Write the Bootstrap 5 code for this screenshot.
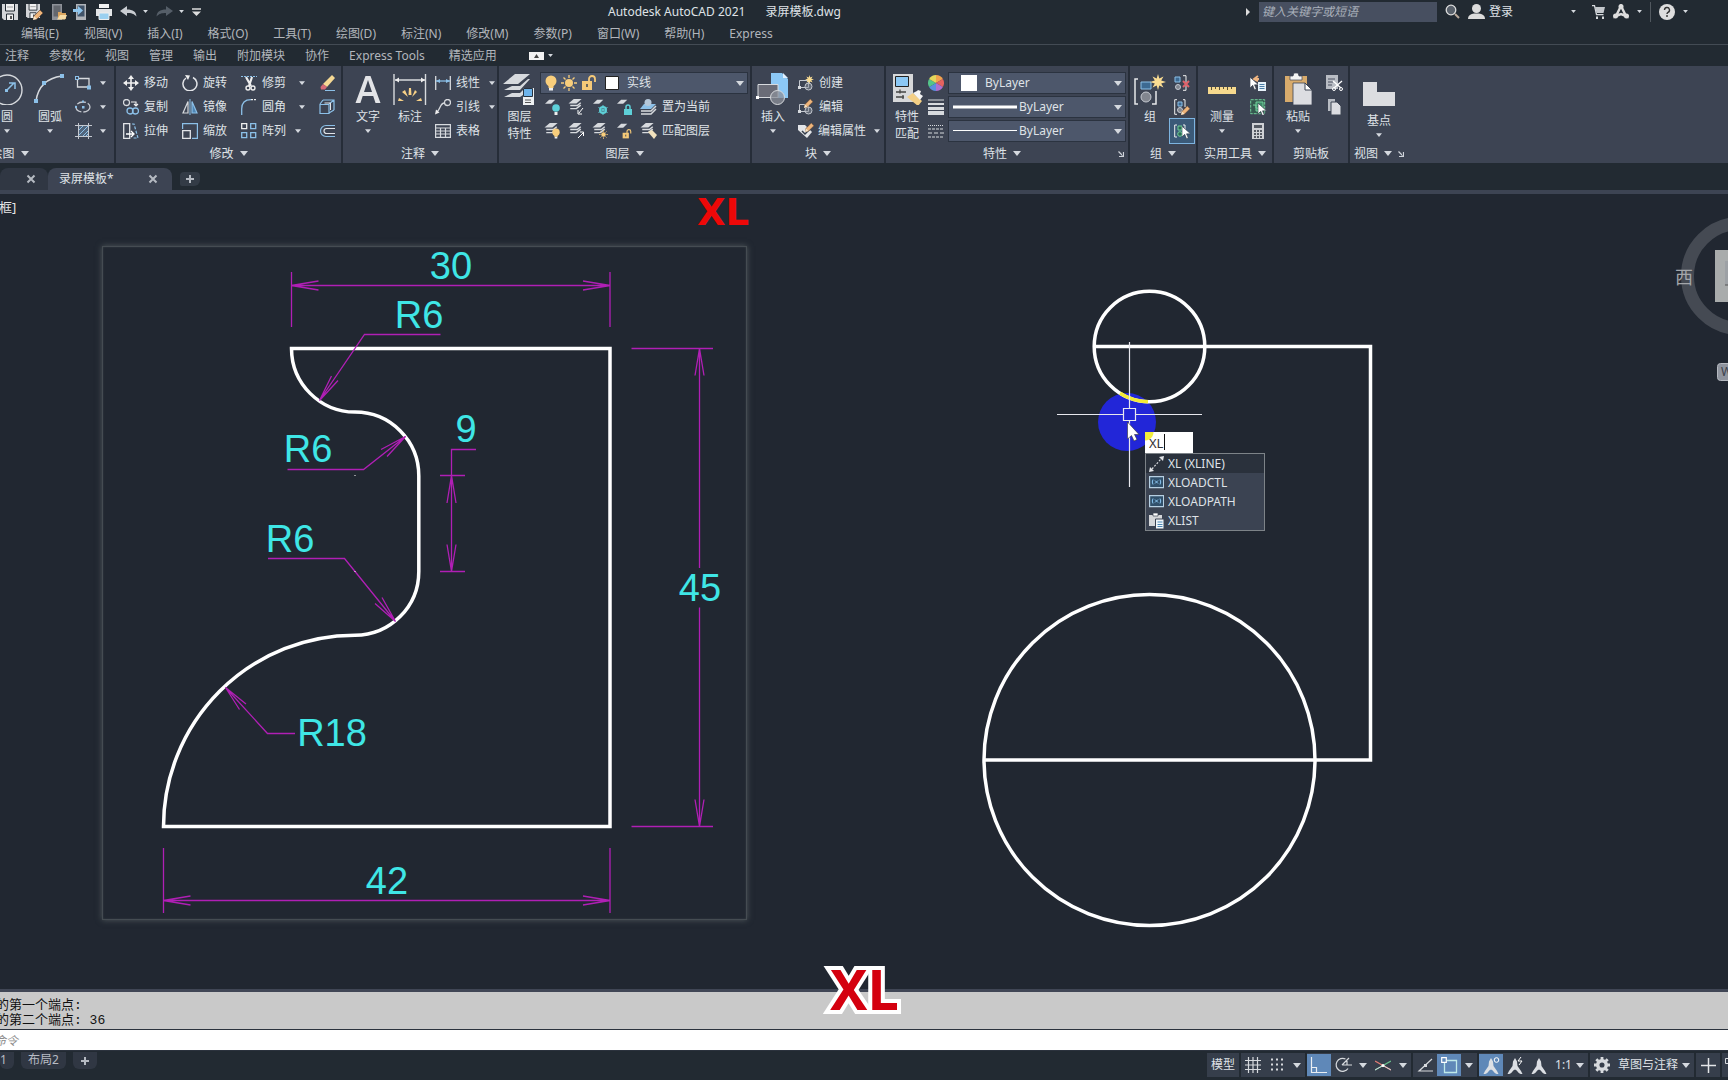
<!DOCTYPE html>
<html lang="zh-CN">
<head>
<meta charset="utf-8">
<meta name="viewport" content="width=device-width, initial-scale=1">
<title>Autodesk AutoCAD 2021 - 录屏模板.dwg</title>
<link href="https://cdn.jsdelivr.net/npm/bootstrap@5.3.0/dist/css/bootstrap.min.css" rel="stylesheet">
<style>
:root{--frame:#222a32;--ribbon:#3d4453;--field:#4d576b;--edge:#262d38;--ink:#dfe2e7;--soft:#b2b6bc;--blue:#8cc0e8;--gold:#f3cd82}
body{font-family:"Noto Sans","Noto Sans CJK SC",sans-serif;font-size:12px;line-height:16px;color:var(--ink);background:var(--frame);height:100vh;overflow:hidden}
button,input,select{font:inherit;color:inherit}
button{background:none;border:0;padding:0;white-space:nowrap}
a{color:inherit;text-decoration:none}
svg{display:block;flex:none}
.titlebar{height:23px}
.title-end{padding-right:40px}
.account{margin-left:58px}
.quick{flex:0 0 608px;padding-left:2px}
.quick button{margin-right:8px}
.quick button.tight{margin-right:6px}
.searchbox{width:178px;height:20px;background:#474f60;border:0;padding:0 3px;font-style:italic;line-height:20px;border-radius:0}
.searchbox::placeholder{color:#a9afba;opacity:1}
.menus{height:22px;gap:25px;padding-left:21px;color:var(--soft);border-bottom:1px solid #434b54;padding-top:3px}
.tabs{height:21px;gap:20px;padding-left:5px;color:var(--soft)}
.ribbon{background:var(--ribbon);height:97px;overflow:hidden}
.panel{flex:none;border-right:2px solid var(--edge);padding-top:4px}
.tools{height:74px}
.rows button,.rows .line{height:24px;display:flex;align-items:center;gap:5px}
.rows{padding-top:1px}
.big{display:flex;flex-direction:column;align-items:center;padding-top:3px;line-height:17px}
.big svg:first-child{margin-bottom:3px}
.caption{height:19px;gap:6px}
.w-draw{width:211px;margin-left:-95px}.w-mod{width:227px}.w-note{width:156px}.w-layer{width:253px}.w-block{width:134px}.w-prop{width:244px}.w-group{width:68px}.w-util{width:76px}.w-clip{width:76px}
.w-mod .tools{gap:14px;padding-left:7px}
.w-draw .big+.big{margin:0 8px 0 10px}
.combo{background:var(--field);border:1px solid #2b3340;height:22px;padding:0 3px 0 4px}
.combo select{appearance:none;background:transparent;border:0;outline:0;padding:0;min-width:0;line-height:18px}
.combo-wrap{padding-right:2px}
.on{background:#3b5a78;box-shadow:0 0 0 1px #7db4e0}
.docs{height:27px;padding-top:5px}
.doc{height:22px;border-radius:8px 8px 0 0;background:#303743}
.doc.live{background:var(--ribbon);width:124px;padding:0 14px 0 11px}
.doc.rest{width:48px;padding-right:12px}
.newdoc{width:20px;height:14px;background:#333b46;border-radius:4px 4px 6px 2px;display:flex;align-items:center;justify-content:center}
.strip{height:4px;background:var(--ribbon)}
.stage{background:#212731;overflow:hidden;min-height:0}
.sheet{left:102px;top:52px;width:645px;height:674px;border:1px solid #454c52;box-shadow:0 0 6px #50585c,inset 0 0 2px #3a4248}
.dims text{font-family:"Liberation Sans",sans-serif;font-size:38px;fill:#3fe6e6}
.hint{left:1145px;top:238px}
.dyn{width:48px;height:21px;border:0;border-radius:0;padding:0 4px;font-size:13px;line-height:19px;color:#333;background:radial-gradient(circle at 0 0,#f2ee3c 8px,#fff 9px)}
.caret-bar{left:19px;top:2px;width:1px;height:16px;background:#111}
.picks{width:120px;background:#3b4352;border:1px solid #7d8388}
.picks button{display:flex;align-items:center;gap:4px;height:19px;width:100%;padding-left:3px}
.picks button:first-child{background:#2a313c}
.cmd{background:#c9c9c9;color:#111;border-top:3px solid #404655;height:40px;font-family:"Liberation Mono","Noto Sans CJK SC",monospace;font-size:13px;line-height:15px;padding-top:6px;overflow:hidden;white-space:pre}
.cmd p{margin:0 0 0 -4px}
.ask{height:22px;border:solid #2b323d;border-width:1px 0;background:#fff;border-radius:0;padding:0;text-indent:-6px;font-style:italic;color:#333;outline:0}
.ask::placeholder{color:#8b8b8b;opacity:1}
.status{height:29px}
.lays{gap:7px;padding-top:1px}
.lay{height:17px;background:#303743;border-radius:0 0 6px 6px;color:#b8bcc4;padding:0 7px}
.stools{padding-top:2px}
.sgroup{background:#363e4b;height:24px;margin-right:2px}
.sgroup>*{height:22px;display:flex;align-items:center;justify-content:center}
.s24{width:24px}.s16{width:16px}.lit{background:#5f88b8}
.caption-red{font-family:"DejaVu Sans",sans-serif;font-weight:700;font-size:37px;fill:#ee0808}
.subtitle-red{left:830px;bottom:60px;font-family:"Noto Sans",sans-serif;font-weight:700;font-size:56px;line-height:64px;color:#d4000f;-webkit-text-stroke:8px #fff;stroke-linejoin:round;paint-order:stroke fill;pointer-events:none}
</style>
</head>
<body class="d-flex flex-column">
<svg width="0" height="0" class="position-absolute" aria-hidden="true">
<defs>
<symbol id="dn" viewBox="0 0 8 5"><path d="M0 0h8L4 5z" fill="#d5d9df"/></symbol>
<symbol id="x" viewBox="0 0 10 10"><path d="M1.500 1.500l7 7M8.500 1.500l-7 7" stroke="#b5bac2" stroke-width="2"/></symbol>
<symbol id="plus" viewBox="0 0 10 10"><path d="M5 1v8M1 5h8" stroke="#b5bac2" stroke-width="2"/></symbol>
<symbol id="save" viewBox="0 0 16 16"><path d="M0 0h16v16H2l-2-2z" fill="#d3d5d8"/><path d="M3.500 0v7h9V0M4.500 16v-6h7v6" fill="#f1f1f1" stroke="#222a32"/><path d="M5 3h6" stroke="#999"/><path d="M8 12h2v3H8z" fill="#555"/></symbol>
<symbol id="pen" viewBox="0 0 10 10"><path d="M0 10l1-4 6-6 3 3-6 6z" fill="#efb57a" stroke="#5a4030" stroke-width=".6"/><path d="M0 10l1-4 3 3z" fill="#f5e3c8"/></symbol>
<symbol id="layer" viewBox="0 0 16 16"><path d="M6 0h9L9 5H0z" fill="#d7dade"/><path d="M2 7.500h8l4-3.200M2 11h7l5-4" stroke="#d7dade" stroke-width="1.700" fill="none"/></symbol>
<symbol id="single" viewBox="0 0 16 16"><path d="M6 1h9L9 7H0z" fill="#d7dade"/></symbol>
<symbol id="bulb" viewBox="0 0 12 16"><circle cx="6" cy="6" r="5.500" fill="#f8ce7c"/><path d="M3.500 10h5v3h-5z" fill="#f8ce7c"/><path d="M4 13h4v2.500H4z" fill="#eee"/></symbol>
<symbol id="sun" viewBox="0 0 16 16"><circle cx="8" cy="8" r="4" fill="#f8ce7c"/><path d="M8 0v3M8 13v3M0 8h3M13 8h3M2.500 2.500l2 2M11.500 11.500l2 2M2.500 13.500l2-2M11.500 4.500l2-2" stroke="#f8ce7c" stroke-width="1.300"/></symbol>
<symbol id="unlock" viewBox="0 0 16 16"><path d="M1 6h10v9H1z" fill="#f5c978"/><path d="M8 7V4a3 3 0 0 1 6 0v3" fill="none" stroke="#f5c978" stroke-width="1.800"/><path d="M6 9v3" stroke="#3d4453" stroke-width="1.500"/></symbol>
<symbol id="arr" viewBox="0 0 10 14"><path d="M0 0v12l3-3 2 5 2-1-2-4.500h4.500z" fill="#fff" stroke="#333b48" stroke-width=".7"/></symbol>
<symbol id="launch" viewBox="0 0 6 6"><path d="M.5.5l4 4M5.500 1v4.500H1" stroke="#cfd3da" fill="none" stroke-width="1.200"/></symbol>
<symbol id="star" viewBox="0 0 16 16"><path d="M8 0l1.300 4.600L13.500 2.500l-2.300 4.100L16 8l-4.800 1.400 2.300 4.100-4.200-2.100L8 16l-1.300-4.600-4.200 2.100 2.300-4.100L0 8l4.800-1.400L2.500 2.500l4.200 2.100z" fill="#f9dc92"/></symbol>
<symbol id="anno" viewBox="0 0 16 16"><path d="M8 0L6 3.500 5.500 8 2 13l-1.500 3c2.500 0 3.500-.5 5-2.500.8-1.200 1.500-1.800 2.500-1.800s1.700.6 2.500 1.800c1.500 2 2.500 2.500 5 2.500L14 13l-3.500-5L10 3.500z" fill="#dcdfe4"/></symbol>
<symbol id="block" viewBox="0 0 16 16"><path d="M1.500 5.500h9v7h-9z" fill="none" stroke="#c3c7ce"/><circle cx="10.500" cy="11.500" r="3.500" fill="#8a9099" fill-opacity=".5" stroke="#c3c7ce"/><path d="M0 11h3v3H0z" fill="#d7dade"/></symbol>
</defs></svg>

<header>
<div class="titlebar d-flex align-items-center">
 <div class="quick d-flex align-items-center">
  <button aria-label="保存"><svg width="16" height="16"><use href="#save"/></svg></button>
  <button aria-label="另存为"><svg width="17" height="16"><use href="#save" width="14" height="14"/><use href="#pen" x="7" y="6" width="10" height="10"/></svg></button>
  <button class="tight" aria-label="打开"><svg width="16" height="16"><path d="M1 0h10v16H1z" fill="#8e9299"/><path d="M2.500 1.500h7v11h-7z" fill="#63676e"/><path d="M7 15V8h3l1 1h4v6z" fill="#d9a45e"/><path d="M6 15.500L9 11h7l-2 4.500z" fill="#f6dca6"/></svg></button>
  <button aria-label="上传"><svg width="15" height="16"><path d="M3 0h10v16H3z" fill="#b0b4ba"/><path d="M4.500 1.500h7v11h-7z" fill="#41546a"/><path d="M0 5h5V2l5 4.500L5 11V8H0z" fill="#8fc6ee"/></svg></button>
  <button aria-label="打印"><svg width="16" height="16"><path d="M3 0h10v4H3z" fill="#f2f2f2"/><path d="M0 5h16v7H0z" fill="#e4e6e8"/><path d="M3 9h10v6.500H3z" fill="#9bd0f0" stroke="#eee"/></svg></button>
  <button class="tight" aria-label="放弃"><svg width="17" height="14"><path d="M0 6l7-5v3.500c6 0 9 2 9.500 7-3-3-5-3.500-9.500-3.500v3z" fill="#c9cdd2"/></svg></button>
  <button aria-label="放弃列表"><svg width="5" height="3"><use href="#dn"/></svg></button>
  <button class="tight" aria-label="重做"><svg width="17" height="14"><path d="M17 6l-7-5v3.500c-6 0-9 2-9.500 7 3-3 5-3.500 9.500-3.500v3z" fill="#555e68"/></svg></button>
  <button aria-label="重做列表"><svg width="5" height="3"><use href="#dn"/></svg></button>
  <button aria-label="自定义"><svg width="9" height="8"><path d="M0 1h9" stroke="#ddd" stroke-width="1.500"/><path d="M0 3.500h9L4.500 8z" fill="#ddd"/></svg></button>
 </div>
 <div class="d-flex gap-3 text-nowrap"><span class="pe-1">Autodesk AutoCAD 2021</span><span>录屏模板.dwg</span></div>
 <div class="title-end ms-auto d-flex align-items-center">
  <svg class="me-2" width="5" height="8"><path d="M0 0l4 4-4 4z" fill="#ddd"/></svg>
  <input class="searchbox" aria-label="搜索" placeholder="键入关键字或短语">
  <button class="ms-2" aria-label="查找"><svg width="15" height="15"><circle cx="6" cy="6" r="4.800" fill="#59616b" stroke="#ddd" stroke-width="1.300"/><path d="M10 10l4 4" stroke="#b9a99a" stroke-width="2"/></svg></button>
  <button class="ms-2 d-flex align-items-center gap-1"><svg width="17" height="16"><circle cx="8.500" cy="4.500" r="4.500" fill="#dcdcdc"/><path d="M0 15c0-4 3-5 6-5.500h5c3 .5 6 1.500 6 5.500z" fill="#dcdcdc"/></svg>登录</button>
  <button aria-label="账户" class="account"><svg width="5" height="3"><use href="#dn"/></svg></button>
  <button class="ms-3" aria-label="购物车"><svg width="13" height="14"><path d="M0 0.700h2.500l2 9h7" stroke="#d6d9dd" fill="none" stroke-width="1.300"/><path d="M3 2h10l-1.500 6h-7z" fill="#c3c7cc"/><path d="M4 11.500h2V14H4zM10 11.500h2V14h-2z" fill="#d6d9dd"/></svg></button>
  <button class="ms-2 d-flex align-items-center gap-2" aria-label="应用"><svg width="16" height="15"><path d="M8 2L3 12l5-2 5 2z" fill="none" stroke="#ddd" stroke-width="2.500"/><circle cx="8" cy="2.500" r="2.500" fill="#ddd"/><circle cx="2.500" cy="12" r="2.500" fill="#ddd"/><circle cx="13.500" cy="12" r="2.500" fill="#ddd"/></svg><svg width="5" height="3"><use href="#dn"/></svg></button>
  <span class="vr mx-2"></span>
  <button class="d-flex align-items-center gap-2" aria-label="帮助"><svg width="16" height="16"><circle cx="8" cy="8" r="8" fill="#dedede"/><path d="M5.500 6a2.500 2.500 0 1 1 3.500 2.300c-.8.400-1 .8-1 1.700M8 11v2" fill="none" stroke="#333" stroke-width="1.400"/></svg><svg width="5" height="3"><use href="#dn"/></svg></button>
 </div>
</div>
<nav class="menus d-flex text-nowrap" aria-label="菜单栏"><a href="#">编辑(E)</a><a href="#">视图(V)</a><a href="#">插入(I)</a><a href="#">格式(O)</a><a href="#">工具(T)</a><a href="#">绘图(D)</a><a href="#">标注(N)</a><a href="#">修改(M)</a><a href="#">参数(P)</a><a href="#">窗口(W)</a><a href="#">帮助(H)</a><a href="#">Express</a></nav>
<nav class="tabs d-flex align-items-center text-nowrap" aria-label="功能区"><a href="#">注释</a><a href="#">参数化</a><a href="#">视图</a><a href="#">管理</a><a href="#">输出</a><a href="#">附加模块</a><a href="#">协作</a><a href="#">Express Tools</a><a href="#" class="ps-1">精选应用</a>
 <button class="ms-2 ps-1 d-flex align-items-center gap-1" aria-label="最小化功能区"><svg width="15" height="8"><path d="M0 0h15v8H0z" fill="#f2f2f2"/><path d="M5 6l2.500-4L10 6z" fill="#444"/></svg><svg width="5" height="3"><use href="#dn"/></svg></button></nav>
</header>

<section class="ribbon d-flex text-nowrap">
 <div class="panel w-draw"><div class="tools d-flex justify-content-end">
  <button class="big"><svg width="32" height="32"><circle cx="16" cy="17" r="15" fill="none" stroke="#d7dade" stroke-width="1.400"/><path d="M16 17l7-7m-5 0h6v6" stroke="#8cc0e8" fill="none" stroke-width="1.500"/><path d="M14 16h3v3h-3z" fill="#8cc0e8"/></svg>圆<svg width="6" height="4" class="mt-1"><use href="#dn"/></svg></button>
  <button class="big"><svg width="34" height="32"><path d="M3 28C5 14 14 5 29 3" fill="none" stroke="#d7dade" stroke-width="1.500"/><path d="M1 26h4v4H1zM9 8h4v4H9zM27 1h4v4h-4z" fill="#8cc0e8"/></svg>圆弧<svg width="6" height="4" class="mt-1"><use href="#dn"/></svg></button>
  <div class="rows pe-2">
   <button aria-label="矩形" class="gap-2"><svg width="17" height="16"><path d="M3 3.500h11v8M2.500 3v9h10" fill="none" stroke="#d7dade" stroke-width="1.300"/><path d="M0 1h4v4H0zM12 10.500h4v4h-4z" fill="#8cc0e8"/><path d="M1 2h2v2H1z" fill="#3d4453"/></svg><svg width="6" height="4"><use href="#dn"/></svg></button>
   <button aria-label="椭圆" class="gap-2"><svg width="17" height="16"><ellipse cx="8" cy="8" rx="7" ry="5" fill="none" stroke="#c5c9d0" stroke-width="1.300" stroke-dasharray="9 2"/><path d="M7 7h2.500v2.500H7zM7 1.500h2v2H7zM0 7h2v2H0z" fill="#8cc0e8"/></svg><svg width="6" height="4"><use href="#dn"/></svg></button>
   <button aria-label="图案填充" class="gap-2"><svg width="17" height="16"><path d="M3 3h11v10H3z" fill="#51657c"/><path d="M3 8l5-5M3 13L13 3M8 13l6-6M11 13l3-3" stroke="#8cc0e8"/><path d="M3.500 0v16M13.500 0v16M0 2.500h17M0 13.500h17" stroke="#c5c9d0"/></svg><svg width="6" height="4"><use href="#dn"/></svg></button>
  </div></div>
  <div class="caption d-flex align-items-center justify-content-center">绘图<svg width="8" height="5"><use href="#dn"/></svg></div>
 </div>

 <div class="panel w-mod"><div class="tools d-flex">
  <div class="rows">
   <button><svg width="16" height="16"><path d="M8 2v12M2 8h12" stroke="#f0f0f0" stroke-width="1.600"/><path d="M8 0l3 4H5zM8 16l3-4H5zM0 8l4-3v6zM16 8l-4-3v6z" fill="#f0f0f0"/></svg>移动</button>
   <button><svg width="16" height="16"><circle cx="3.500" cy="3.500" r="3" fill="none" stroke="#d7dade" stroke-width="1.300"/><path d="M8 3h5v3m-2-1l2 2 2-2" fill="none" stroke="#eee" stroke-width="1.200"/><circle cx="7" cy="12" r="3" fill="none" stroke="#8cc0e8" stroke-width="1.300"/><circle cx="12.500" cy="12" r="3" fill="none" stroke="#8cc0e8" stroke-width="1.300"/></svg>复制</button>
   <button><svg width="16" height="16"><path d="M.7.700h6v14.600h-6z" fill="none" stroke="#e2e4e8" stroke-width="1.300"/><path d="M9 1h2l4 14H9" fill="none" stroke="#8cc0e8" stroke-width="1.200" stroke-dasharray="3 1.500"/><path d="M3 11h7m-2-3l3 3-3 3" fill="none" stroke="#fff" stroke-width="1.300"/></svg>拉伸</button>
  </div>
  <div class="rows">
   <button><svg width="16" height="16"><path d="M4 3a7 7 0 1 0 7-.5" fill="none" stroke="#e2e4e8" stroke-width="1.500"/><path d="M3 0l5 .5-2 4.500z" fill="#eee"/></svg>旋转</button>
   <button><svg width="16" height="16"><path d="M6 2.500V14H1z" fill="none" stroke="#d7dade" stroke-width="1.200"/><path d="M10 2.500V14h5z" fill="#4f86b4" stroke="#8cc0e8" stroke-width="1.200"/><path d="M8 0v16" stroke="#8cc0e8"/></svg>镜像</button>
   <button><svg width="16" height="16"><path d="M.6 6V.6h14.800v14.800H10" fill="none" stroke="#8cc0e8" stroke-width="1.200"/><path d="M.7 7.700h7.600v7.600H.7z" fill="none" stroke="#e2e4e8" stroke-width="1.300"/></svg>缩放</button>
  </div>
  <div class="rows">
   <button><svg width="16" height="16"><path d="M0 1.500h16" stroke="#8cc0e8" stroke-dasharray="2 1"/><path d="M5 2l5 9M11 2L8 11" stroke="#eee" stroke-width="2.200"/><circle cx="7" cy="13" r="2" fill="none" stroke="#eee" stroke-width="1.400"/><circle cx="12" cy="13" r="2" fill="none" stroke="#eee" stroke-width="1.400"/></svg>修剪<svg class="ms-2" width="6" height="4"><use href="#dn"/></svg></button>
   <button><svg width="16" height="16"><path d="M.7 16v-6C.7 4 4 .7 10 .7" fill="none" stroke="#8cc0e8" stroke-width="1.300"/><path d="M10 .7h6" stroke="#eee" stroke-width="1.300" stroke-dasharray="2 1"/></svg>圆角<svg class="ms-2" width="6" height="4"><use href="#dn"/></svg></button>
   <button><svg width="16" height="16"><g fill="none" stroke="#8cc0e8" stroke-width="1.300"><path d="M9.700.7h5v5h-5zM.7 9.700h5v5h-5zM9.700 9.700h5v5h-5z"/><path d="M.7.700h5v5h-5z" stroke="#eee"/></g></svg>阵列<svg class="ms-1" width="6" height="4"><use href="#dn"/></svg></button>
  </div>
  <div class="rows">
   <button aria-label="删除"><svg width="17" height="16"><path d="M4 9L13 0l3 3-8 9z" fill="#f6d994"/><path d="M4 9l4 3-2 2.500H2L1.500 12z" fill="#d66a77"/><path d="M6 15.500h10" stroke="#8cc0e8"/></svg></button>
   <button aria-label="分解"><svg width="17" height="16"><path d="M1 5.500h9v9H1zM4 1h11v10M1 5l3-4M10 5l5-4M10 14l5-3" fill="none" stroke="#8cc0e8" stroke-width="1.200"/><path d="M5.500 4h6v7" stroke="#e2e4e8" fill="none"/></svg></button>
   <button aria-label="偏移"><svg width="17" height="16"><path d="M16 2.500H7a5.500 5.500 0 0 0 0 11h9" fill="none" stroke="#8cc0e8" stroke-width="1.200"/><path d="M16 5.500H7.500a2.500 2.500 0 0 0 0 5H16" fill="none" stroke="#e2e4e8" stroke-width="1.200"/></svg></button>
  </div></div>
  <div class="caption d-flex align-items-center justify-content-center">修改<svg width="8" height="5"><use href="#dn"/></svg></div>
 </div>

 <div class="panel w-note"><div class="tools d-flex ps-2">
  <button class="big"><svg width="34" height="32"><path d="M4.500 30L14.500 3h5l10 27h-5l-2.300-7H11.700l-2.300 7zM13 19h8L17 7z" fill="#e3e4e7" fill-rule="evenodd"/></svg>文字<svg width="6" height="4" class="mt-1"><use href="#dn"/></svg></button>
  <button class="big ms-2 me-2"><svg width="34" height="32"><path d="M1 1v31M32.500 1v31M2 7h30" stroke="#d7dade" stroke-width="1.400"/><path d="M2 7l4-2.500v5zM32 7l-4-2.500v5z" fill="#eee"/><path d="M5 28h6l-5-3zM29 28h-6l5-3zM9 19l6 5-3-7zM24 19l-5 5 3-7zM16 15h2l.5 7h-3z" fill="#f8d187"/></svg>标注</button>
  <div class="rows">
   <button><svg width="16" height="16"><path d="M.7 1v14M15.300 1v14" stroke="#d7dade" stroke-width="1.300"/><path d="M1 6h14" stroke="#8cc0e8" stroke-width="1.300"/><path d="M1 6l4-2v4zM15 6l-4-2v4z" fill="#8cc0e8"/></svg>线性<svg class="ms-1" width="6" height="4"><use href="#dn"/></svg></button>
   <button><svg width="16" height="16"><circle cx="12.500" cy="3.500" r="3" fill="none" stroke="#d7dade" stroke-width="1.300"/><path d="M9.500 4C5 4 6 9 2 13" fill="none" stroke="#d7dade" stroke-width="1.300"/><path d="M0 15.500l1-5 3.500 3z" fill="#eee"/></svg>引线<svg class="ms-1" width="6" height="4"><use href="#dn"/></svg></button>
   <button><svg width="16" height="16"><path d="M.6 1.600h14.800v12.800H.6zM.6 5h14.800M.6 8h14.800M.6 11h14.800M5.500 5v9.500M10.500 5v9.500" fill="none" stroke="#d7dade" stroke-width="1.200"/></svg>表格</button>
  </div></div>
  <div class="caption d-flex align-items-center justify-content-center">注释<svg width="8" height="5"><use href="#dn"/></svg></div>
 </div>

 <div class="panel w-layer"><div class="tools d-flex">
  <button class="big px-1"><svg width="33" height="32"><path d="M12 1h15L15 11H0zM9 13h8l8-7h2L17 17H1zM9 20h8l3-3v5l-3 2H1z" fill="#d7dade"/><path d="M20 15h11v17H20z" fill="#eef0f2"/><path d="M20.500 15.500h9v8h-9z" fill="#6db3ea" stroke="#28333f"/><path d="M22 27h6M22 29.500h6" stroke="#555"/></svg><span>图层<br>特性</span></button>
  <div class="rows combo-wrap flex-fill">
   <div class="line"><div class="combo flex-fill d-flex align-items-center gap-1"><svg width="12" height="16"><use href="#bulb"/></svg><svg width="16" height="16"><use href="#sun"/></svg><svg width="16" height="16"><use href="#unlock"/></svg><svg class="mx-1" width="14" height="14"><path d="M.5.500h13v13H.5z" fill="#fff" stroke="#222"/></svg><select class="flex-fill" aria-label="图层"><option>实线</option></select><svg width="8" height="5"><use href="#dn"/></svg></div></div>
    <div class="line gap-2 ps-1"><button aria-label="关"><svg width="16" height="16"><use href="#single" width="13" height="11"/><circle cx="12" cy="9" r="3.800" fill="#5ed0d8"/><path d="M10.500 13h3v3h-3z" fill="#eee"/></svg></button><button aria-label="隔离"><svg width="16" height="16"><use href="#layer" width="15" height="14"/><path d="M15 9l-4 5m-1-3v4h4" stroke="#fff" fill="none"/></svg></button><button aria-label="冻结"><svg width="16" height="16"><use href="#single" width="13" height="11"/><circle cx="11" cy="11" r="3" fill="none" stroke="#5ed0d8" stroke-width="2"/><path d="M11 6v10M6.500 8.500l9 5M6.500 13.500l9-5" stroke="#5ed0d8"/></svg></button><button aria-label="锁定"><svg width="16" height="16"><use href="#single" width="13" height="11"/><path d="M8 10h8v6H8z" fill="#5ed0d8"/><path d="M10 10V8a2 2 0 0 1 4 0v2" stroke="#5ed0d8" stroke-width="1.500" fill="none"/></svg></button><button><svg width="17" height="16"><path d="M4 5h12l-5 5H0z" fill="#8cc0e8"/><path d="M1 12h10l5-5M1 15h10l5-5" fill="none" stroke="#d7dade" stroke-width="1.500"/><circle cx="8" cy="3.500" r="3.500" fill="#b4c6d8"/></svg>置为当前</button></div>
    <div class="line gap-2 ps-1"><button aria-label="开"><svg width="16" height="16"><use href="#layer" width="15" height="14"/><use href="#bulb" x="8" y="5" width="8" height="11"/></svg></button><button aria-label="取消隔离"><svg width="16" height="16"><use href="#layer" width="15" height="14"/><path d="M10 15l5-5m-3-1h3.500v4" stroke="#fff" fill="none"/></svg></button><button aria-label="解冻"><svg width="16" height="16"><use href="#layer" width="15" height="14"/><use href="#sun" x="7" y="7" width="9" height="9"/></svg></button><button aria-label="解锁"><svg width="16" height="16"><use href="#single" width="13" height="11"/><use href="#unlock" x="6" y="6" width="10" height="10"/></svg></button><button><svg width="17" height="16"><use href="#layer" width="15" height="14"/><path d="M8 9l4-2 5 5-3 4z" fill="#f1e1bd"/></svg>匹配图层</button></div>
   </div></div>
  <div class="caption d-flex align-items-center justify-content-center">图层<svg width="8" height="5"><use href="#dn"/></svg></div>
 </div>

 <div class="panel w-block"><div class="tools d-flex">
  <button class="big px-1"><svg width="34" height="32"><path d="M15 0h11l6 6v19H15z" fill="#8cc8f5"/><path d="M27 0l5 5h-5z" fill="#dff0ff"/><path d="M2 11.500h20v13H2z" fill="#6a6c77" stroke="#d7dade"/><circle cx="21.500" cy="24.500" r="7" fill="#8b8f98" fill-opacity=".75" stroke="#d7dade"/><path d="M0 23h3v3H0z" fill="#fff"/></svg>插入<svg width="6" height="4" class="mt-1"><use href="#dn"/></svg></button>
  <div class="rows ps-1">
   <button><svg width="16" height="16"><use href="#block"/><use href="#star" x="7" y="0" width="9" height="9"/></svg>创建</button>
   <button><svg width="16" height="16"><use href="#block"/><use href="#pen" x="6" y="0" width="9" height="9"/></svg>编辑</button>
   <button class="gap-1"><svg width="16" height="16"><path d="M0 2l7 0 7 7-5 6L0 7z" fill="#e3e5e8"/><path d="M4 8l3 3 5-5" stroke="#333b48" stroke-width="1.500" fill="none"/><use href="#pen" x="7" y="0" width="9" height="9"/></svg>编辑属性<svg class="ms-1" width="6" height="4"><use href="#dn"/></svg></button>
  </div></div>
  <div class="caption d-flex align-items-center justify-content-center">块<svg width="8" height="5"><use href="#dn"/></svg></div>
 </div>

 <div class="panel w-prop"><div class="tools d-flex">
  <button class="big px-1"><svg width="34" height="32"><path d="M3 1h20v28H3z" fill="#d7d8da"/><path d="M5.500 3.500h13v10h-13z" fill="#8cc8f5" stroke="#222"/><path d="M6 19h10M6 24h8M10 16.500v4M13 22v4" stroke="#444" stroke-width="1.300"/><path d="M17 24l6-4 9 8-4 5z" fill="#f3cf85"/><path d="M23 20l4-2 1-1 3 1-1 3 3 2-3 4z" fill="#f4f4f4"/></svg><span>特性<br>匹配</span></button>
  <div class="rows combo-wrap flex-fill">
   <div class="line gap-1"><svg width="16" height="16"><g transform="translate(8 8)"><path d="M0 0V-8A8 8 0 0 1 6.900-4z" fill="#f3a34e"/><path d="M0 0L6.900-4A8 8 0 0 1 6.900 4z" fill="#e5625f"/><path d="M0 0L6.900 4A8 8 0 0 1 0 8z" fill="#b06fd0"/><path d="M0 0V8A8 8 0 0 1-6.900 4z" fill="#5a8fe0"/><path d="M0 0L-6.900 4A8 8 0 0 1-6.900-4z" fill="#54c48a"/><path d="M0 0L-6.900-4A8 8 0 0 1 0-8z" fill="#e4d75b"/></g></svg><div class="combo flex-fill d-flex align-items-center gap-1"><svg class="ms-2 me-1" width="16" height="16"><path d="M0 0h16v16H0z" fill="#fff"/></svg><select class="flex-fill" aria-label="对象颜色"><option>ByLayer</option></select><svg width="8" height="5"><use href="#dn"/></svg></div></div>
   <div class="line gap-1"><svg width="16" height="16"><path d="M0 1h16" stroke="#d7dade"/><path d="M0 5h16" stroke="#d7dade" stroke-width="2"/><path d="M0 9.500h16" stroke="#d7dade" stroke-width="3"/><path d="M0 14h16" stroke="#d7dade" stroke-width="4"/></svg><div class="combo flex-fill d-flex align-items-center"><svg width="66" height="4"><path d="M0 2h64" stroke="#fff" stroke-width="3"/></svg><select class="flex-fill" aria-label="线宽"><option>ByLayer</option></select><svg width="8" height="5"><use href="#dn"/></svg></div></div>
   <div class="line gap-1"><svg width="16" height="16"><path d="M0 2.500h16" stroke="#d7dade" stroke-dasharray="1 1"/><path d="M0 6h16" stroke="#d7dade" stroke-dasharray="3 1"/><path d="M0 10h16" stroke="#d7dade" stroke-dasharray="4 2"/><path d="M0 14h16" stroke="#d7dade" stroke-dasharray="3 1"/></svg><div class="combo flex-fill d-flex align-items-center"><svg width="66" height="4"><path d="M0 1.500h64" stroke="#fff"/></svg><select class="flex-fill" aria-label="线型"><option>ByLayer</option></select><svg width="8" height="5"><use href="#dn"/></svg></div></div>
  </div></div>
  <div class="caption d-flex align-items-center pe-1"><span class="flex-fill"></span>特性<svg width="8" height="5"><use href="#dn"/></svg><span class="flex-fill d-flex justify-content-end"><svg width="6" height="6"><use href="#launch"/></svg></span></div>
 </div>

 <div class="panel w-group"><div class="tools d-flex">
  <button class="big ps-1"><svg width="32" height="32"><path d="M4 6H1v25h3M18 31h4V18" fill="none" stroke="#e6e7ea" stroke-width="1.500"/><path d="M7 9h10v7H7z" fill="#3d6a92" stroke="#8cc0e8"/><circle cx="12" cy="24" r="5" fill="#82868f" stroke="#c5c9d0"/><use href="#star" x="16" y="1" width="16" height="16"/></svg>组</button>
  <div class="rows ms-1">
   <button aria-label="解除编组" class="px-1"><svg width="16" height="16"><path d="M1 2h5v5H1z" fill="#3d6a92" stroke="#8cc0e8"/><circle cx="4" cy="12" r="2.500" fill="#82868f" stroke="#c5c9d0"/><path d="M9 .7h3v14.600H9" stroke="#eee" fill="none"/><path d="M9 6l6 6M15 6l-6 6" stroke="#e0626a" stroke-width="2"/></svg></button>
   <button aria-label="组编辑" class="px-1"><svg width="16" height="16"><path d="M3 .7H.7v14.600H3M9 .7h2V8" stroke="#eee" fill="none"/><path d="M4 3h4v4H4z" fill="#3d6a92" stroke="#8cc0e8"/><circle cx="6" cy="11" r="2.500" fill="#82868f" stroke="#c5c9d0"/><use href="#pen" x="7" y="7" width="9" height="9"/></svg></button>
   <button aria-label="启用组选择" class="px-1 on"><svg width="16" height="16"><path d="M3 2H.7v12H3M9 2h2v6" stroke="#eee" fill="none"/><path d="M4 3h4v4H4z" fill="#2e6a55" stroke="#72cf9b"/><circle cx="6" cy="11" r="2.300" fill="#2e6a55" stroke="#72cf9b"/><use href="#arr" x="8" y="3" width="9" height="13"/></svg></button>
  </div></div>
  <div class="caption d-flex align-items-center justify-content-center">组<svg width="8" height="5"><use href="#dn"/></svg></div>
 </div>

 <div class="panel w-util"><div class="tools d-flex">
  <button class="big ps-2"><svg width="32" height="32"><path d="M2 14h28v7H2z" fill="#f6d98d"/><path d="M5.500 14v3M9.500 14v2M13.500 14v3M17.500 14v2M21.500 14v3M25.500 14v2" stroke="#57503a"/></svg>测量<svg width="6" height="4" class="mt-1"><use href="#dn"/></svg></button>
  <div class="rows ms-2 ps-1">
   <button aria-label="快速选择"><svg width="17" height="16"><path d="M8 1L4 4l4 2M4 4h5" stroke="#f1b681" stroke-width="2" fill="none"/><use href="#arr" x="0" y="2" width="9" height="13"/><path d="M8 7h8v9H8z" fill="#e8f3fb"/><path d="M9.500 9.500h5M9.500 11.500h5M9.500 13.500h5" stroke="#4b7ea8"/></svg></button>
   <button aria-label="全部选择"><svg width="17" height="16"><path d="M.7.700h14v14H.7z" fill="#35594f" stroke="#72cf9b" stroke-dasharray="3 1"/><path d="M6 3h7v6H6zM3 6h3v6h6V9" fill="#3f8a6b" stroke="#72cf9b"/><use href="#arr" x="8" y="4" width="9" height="13"/></svg></button>
   <button aria-label="计算器"><svg width="17" height="16"><path d="M2 0h12v16H2z" fill="#cfd1d5"/><path d="M4 2h8v3H4z" fill="#555a63"/><path d="M4 8h8M4 11h8M4 14h8" stroke="#555a63" stroke-width="1.800" stroke-dasharray="2 1"/></svg></button>
  </div></div>
  <div class="caption d-flex align-items-center justify-content-center">实用工具<svg width="8" height="5"><use href="#dn"/></svg></div>
 </div>

 <div class="panel w-clip"><div class="tools d-flex">
  <button class="big ps-2"><svg width="32" height="32"><path d="M3 3h22v26H3z" fill="#d8ab6c"/><path d="M8 3h3l1-3h4l1 3h3v4H8z" fill="#f4f4f4" stroke="#3d4453" stroke-width=".7"/><path d="M11 10h12l7 7v15H11z" fill="#dcdde1" stroke="#3d4453" stroke-width=".8"/><path d="M23 10l7 7h-7z" fill="#fff" stroke="#3d4453"/></svg>粘贴<svg width="6" height="4" class="mt-1"><use href="#dn"/></svg></button>
  <div class="rows ms-2 ps-1">
   <button aria-label="剪切"><svg width="17" height="16"><path d="M0 0h12v14H0z" fill="#b9bdc4"/><path d="M2 4h7M2 7h5M2 10h4" stroke="#4a5160"/><path d="M7 6l8 7M16 6l-8 7" stroke="#fff" stroke-width="1.300"/><circle cx="8" cy="14" r="1.500" fill="none" stroke="#fff"/><circle cx="15" cy="14" r="1.500" fill="none" stroke="#fff"/></svg></button>
   <button aria-label="复制剪裁"><svg width="17" height="16"><path d="M2 0h7v12H2z" fill="#b9bdc4"/><path d="M5 3h6l4 4v9H5z" fill="#dcdde1" stroke="#3d4453"/></svg></button>
  </div></div>
  <div class="caption d-flex align-items-center justify-content-center">剪贴板</div>
 </div>

 <div class="pt-1"><div class="tools d-flex">
  <button class="big ms-2 ps-1 pt-2"><svg width="34" height="31"><path d="M1 4h14v10h18v14H1z" fill="#dcdde0"/></svg>基点<svg width="6" height="4" class="mt-1"><use href="#dn"/></svg></button></div>
  <div class="caption d-flex align-items-center ps-1">视图<svg width="8" height="5"><use href="#dn"/></svg><svg width="6" height="6"><use href="#launch"/></svg></div>
 </div>
</section>

<div class="docs d-flex align-items-center text-nowrap">
 <div class="doc rest d-flex align-items-center justify-content-end"><button aria-label="关闭"><svg width="10" height="10"><use href="#x"/></svg></button></div>
 <div class="doc live d-flex align-items-center justify-content-between"><a href="#">录屏模板*</a><button aria-label="关闭"><svg width="10" height="10"><use href="#x"/></svg></button></div>
 <button class="newdoc ms-2" aria-label="新图形"><svg width="10" height="10"><use href="#plus"/></svg></button>
</div>
<div class="strip flex-shrink-0"></div>

<main class="stage flex-fill position-relative">
 <div class="sheet position-absolute"></div>
 <svg class="position-absolute top-0 start-0 w-100 h-100">
 <g transform="translate(0 -194)">
  <text x="-1" y="212" font-size="13" fill="#e6e6e6">框]</text>
  <text class="caption-red" x="697" y="225">XL</text>
  <g fill="none" stroke="#fff" stroke-width="3.500">
   <path d="M291.500 348.500H610V826.500H163.500A191.500 191.500 0 0 1 355 635.200A63.800 63.800 0 0 0 418.800 571.400V475.900A63.800 63.800 0 0 0 355 412.100A63.800 63.800 0 0 1 291.500 348.500z"/>
  </g>
  <g fill="none" stroke="#b01fb5" stroke-width="1.300">
   <path d="M291.500 272v55M610 272v55M291.500 285.500H610M318.500 281l-27 4.500 27 4.500M583 281l27 4.500-27 4.500"/>
   <path d="M440.500 334.500H364.500L319.500 400.500M331.500 376l-12 24.500 18.500-20"/>
   <path d="M287.500 469.500H363.500L405.500 436.500M381 449.500l24.500-13-18.500 20"/>
   <path d="M268 558.500H344.500L395.500 621.500M375 603.500l20.500 18-13.500-24"/>
   <path d="M476 449.500H451.500V571.500M440 475.500h25M440 571.500h25M447 503l4.500-27.500 4.500 27.500M447 544.500l4.500 27 4.500-27"/>
   <path d="M295 733.500H267.500L225.500 687.500M239.500 709.500l-14-22 20.500 16.500"/>
   <path d="M631.500 348.500H713M631.500 826.500H713M699.500 348.500V568M699.500 607.500V826.500M695 375.500l4.500-27 4.500 27M695 799.500l4.500 27 4.500-27"/>
   <path d="M163.500 848v65M610 848v65M163.500 900.500H610M190.500 896l-27 4.500 27 4.500M583 896l27 4.500-27 4.500"/>
  </g>
  <path d="M354.500 475h1v1h-1zM354.500 571h1v1h-1z" fill="#fff"/>
  <g class="dims" text-anchor="middle">
   <text x="451" y="279">30</text><text x="419" y="328">R6</text><text x="308" y="462">R6</text><text x="290" y="552">R6</text><text x="466" y="442">9</text><text x="332" y="746">R18</text><text x="700" y="601">45</text><text x="387" y="894">42</text>
  </g>
  <circle cx="1127" cy="422" r="29" fill="#2226d8"/>
  <g fill="none" stroke="#fff" stroke-width="3.500">
   <circle cx="1149.500" cy="346.500" r="55.300"/>
   <circle cx="1149.500" cy="760" r="165.500"/>
   <path d="M1094.500 346.500H1370.500V760H984.500"/>
  </g>
  <path d="M1120 393.300A55.300 55.300 0 0 0 1148 401.800" fill="none" stroke="#f4ea35" stroke-width="3.500"/>
  <path d="M1129.500 342V487M1057 414.500H1202" stroke="#e8e8ee" stroke-width="1.200"/>
  <path d="M1123.500 408.500h12v12h-12z" fill="#2226d8" stroke="#e8e8ee" stroke-width="1.200"/>
  <path d="M1127.500 422v17l4-3.500 2.500 5.500 3-1.500-2.500-5h4.500z" fill="#fff" stroke="#333" stroke-width=".6"/>
  <circle cx="1740" cy="276" r="52.500" fill="none" stroke="#454a53" stroke-width="13"/>
  <text x="1675" y="284" font-size="18" fill="#a3a6aa">西</text>
  <path d="M1715 250h13v52h-13z" fill="#a9acac"/><path d="M1725 261h3v24h-3z" fill="#9da1a5"/><path d="M1725 285h3" stroke="#555"/>
  <rect x="1717.500" y="363.500" width="30" height="17" rx="3" fill="#8f949e" stroke="#b5b9c0"/><text x="1721" y="376" font-size="12" fill="#3b414b">W</text>
 </g></svg>
 <div class="hint position-absolute">
  <div class="position-relative"><input class="dyn d-block" aria-label="命令输入" value="XL"><span class="caret-bar position-absolute"></span></div>
  <div class="picks">
   <button><svg width="15" height="16"><path d="M3 13L12 3" stroke="#d7dade" stroke-width="1.200" stroke-dasharray="2 1.500"/><path d="M0 16l1-5 4 4zM15 0l-5 1 4 4z" fill="#e3e5e8"/></svg>XL (XLINE)</button>
   <button><svg width="15" height="13"><path d="M.6.600h14v11H.6z" fill="#31506b" stroke="#b6cfe2" stroke-width="1.200"/><path d="M4 3.500q-1.500 2.500 0 5M11 3.500q1.500 2.500 0 5M6 4.500l3 3M9 4.500l-3 3" fill="none" stroke="#8cc8f5"/></svg>XLOADCTL</button>
   <button><svg width="15" height="13"><path d="M.6.600h14v11H.6z" fill="#31506b" stroke="#b6cfe2" stroke-width="1.200"/><path d="M4 3.500q-1.500 2.500 0 5M11 3.500q1.500 2.500 0 5M6 4.500l3 3M9 4.500l-3 3" fill="none" stroke="#8cc8f5"/></svg>XLOADPATH</button>
   <button><svg width="15" height="16"><path d="M0 2h13v11H0z" fill="#d5d7da"/><path d="M4 0h5v3H4z" fill="#fff" stroke="#3b4352" stroke-width=".7"/><path d="M6.500 6h8.500v10H6.500z" fill="#f0f6fa" stroke="#3b4352"/><path d="M8.500 9h5M8.500 11.500h5M8.500 13.500h5" stroke="#4b86b4"/></svg>XLIST</button>
  </div>
 </div>
</main>

<footer class="position-relative">
 <div class="cmd"><p>的第一个端点:</p><p>的第二个端点: 36</p></div>
 <input class="ask d-block w-100" aria-label="命令行" placeholder="命令">
 <div class="status d-flex align-items-start text-nowrap">
  <div class="lays d-flex"><a class="lay ps-0" href="#">1</a><a class="lay" href="#">布局2</a><button class="lay" aria-label="新建布局"><svg width="10" height="10"><use href="#plus"/></svg></button></div>
  <div class="stools ms-auto d-flex">
   <div class="sgroup d-flex align-items-center"><button class="px-1">模型</button></div>
   <div class="sgroup d-flex align-items-center"><button class="s24" aria-label="栅格"><svg width="16" height="16"><path d="M3.500 0v16M8 0v16M12.500 0v16M0 3.500h16M0 8h16M0 12.500h16" stroke="#d7dade" stroke-width="1.200"/></svg></button><button class="s24" aria-label="捕捉"><svg width="14" height="14"><path d="M1 1.500h12M1 6.500h12M1 11.500h12" stroke="#d7dade" stroke-width="2" stroke-dasharray="2 3"/></svg></button><button class="s16" aria-label="捕捉设置"><svg width="8" height="5"><use href="#dn"/></svg></button></div>
   <div class="sgroup d-flex align-items-center"><button class="s24 lit" aria-label="正交"><svg width="18" height="18"><path d="M1.500 1v15.500H17M1.500 11.500h5v5" stroke="#e9edf2" fill="none" stroke-width="1.200"/></svg></button><button class="s24" aria-label="极轴"><svg width="17" height="16"><path d="M13 11.500A6.500 6.500 0 1 1 10.500 2M7 8h10M7 8l7-7M12 8V4" stroke="#d7dade" fill="none" stroke-width="1.200"/></svg></button><button class="s16" aria-label="极轴设置"><svg width="8" height="5"><use href="#dn"/></svg></button><button class="s24" aria-label="等轴测"><svg width="16" height="12"><path d="M0 11L16 2" stroke="#6ac08c" stroke-width="1.200"/><path d="M0 2l16 9" stroke="#e07b72" stroke-width="1.200"/><path d="M0 11l8-4.500 8 4.500" stroke="#cfd3d8" fill="none"/><circle cx="8" cy="6.500" r="1.500" fill="#fff"/></svg></button><button class="s16" aria-label="等轴测设置"><svg width="8" height="5"><use href="#dn"/></svg></button></div>
   <div class="sgroup d-flex align-items-center"><button class="s24" aria-label="追踪"><svg width="16" height="14"><path d="M15 1L2 13h14" stroke="#d7dade" fill="none" stroke-width="1.200"/><path d="M7 6h3v3H7z" fill="#d7dade"/></svg></button><button class="s24 lit" aria-label="对象捕捉"><svg width="17" height="17"><path d="M6 3.500h9.500v12h-12V6" stroke="#bfe9e9" fill="none" stroke-width="1.300"/><path d="M.7.700h4.600v4.600H.7z" stroke="#fff" fill="none" stroke-width="1.200"/></svg></button><button class="s16" aria-label="捕捉模式"><svg width="8" height="5"><use href="#dn"/></svg></button></div>
   <div class="sgroup d-flex align-items-center"><button class="s24 lit" aria-label="注释可见"><svg width="17" height="17"><use href="#anno" y="1" width="16" height="16"/><circle cx="13.500" cy="3" r="2.300" fill="none" stroke="#fff"/></svg></button><button class="s24" aria-label="自动缩放"><svg width="17" height="17"><use href="#anno" y="1" width="16" height="16"/><path d="M14 0l-3 4h4l-3 4" stroke="#fff" fill="none"/></svg></button><button class="s24" aria-label="注释比例"><svg width="16" height="17"><use href="#anno" y="1" width="16" height="16"/></svg></button><button class="gap-1 px-1">1:1<svg width="8" height="5"><use href="#dn"/></svg></button></div>
   <div class="sgroup d-flex align-items-center"><button class="s24" aria-label="设置"><svg width="16" height="16"><circle cx="8" cy="8" r="4.300" fill="none" stroke="#d7dade" stroke-width="3.500"/><path d="M8 0v3M8 13v3M0 8h3M13 8h3M2.300 2.300l2 2M11.700 11.700l2 2M2.300 13.700l2-2M11.700 4.300l2-2" stroke="#d7dade" stroke-width="2.800"/></svg></button><button class="gap-1 px-1">草图与注释<svg width="8" height="5"><use href="#dn"/></svg></button></div>
   <div class="sgroup d-flex align-items-center"><button class="s24" aria-label="注释监视器"><svg width="17" height="17"><path d="M8.500 1v15M1 8.500h15" stroke="#e3e5e8" stroke-width="1.500"/></svg></button></div>
   <div class="sgroup d-flex align-items-center me-0"><button aria-label="隔离对象"><svg width="6" height="16"><path d="M6 1.500H3.500v5H6" stroke="#d7dade" fill="none"/></svg></button></div>
  </div>
 </div>
 <div class="subtitle-red position-absolute">XL</div>
</footer>
<script src="https://cdn.jsdelivr.net/npm/bootstrap@5.3.0/dist/js/bootstrap.bundle.min.js"></script>
</body>
</html>
